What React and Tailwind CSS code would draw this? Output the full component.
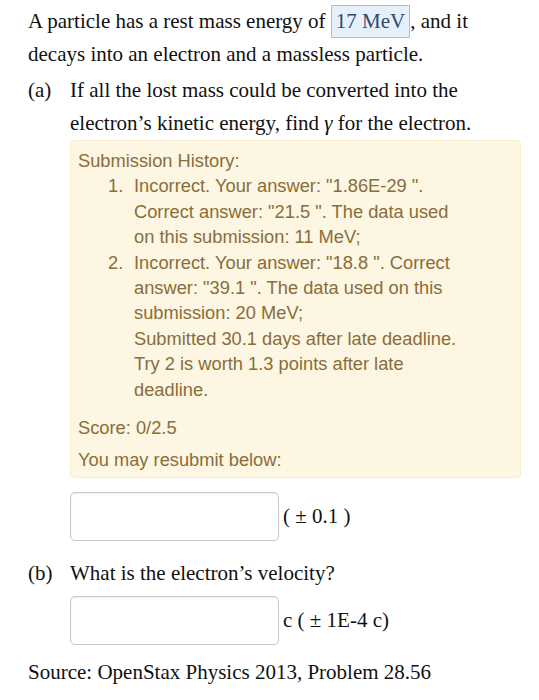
export default function App() {
  const serif = { fontFamily: '"Liberation Serif", "Times New Roman", serif' };
  const Input = () => (
    <div className="w-[209px] h-[49px] rounded-[5px] border border-[#c8c8c8] bg-white shadow-[inset_0_1px_2px_rgba(0,0,0,0.08)] shrink-0" />
  );
  return (
    <div className="w-[539px] h-[700px] bg-white text-[#111] overflow-hidden">
      <div className="pl-[28px] pt-[5px] text-[21px] leading-[33px]" style={serif}>
        <div className="whitespace-nowrap">
          A particle has a rest mass energy of{" "}
          <span className="inline-block h-[33px] px-[4px] border border-[#9fc3e6] bg-[#e6f0fa] text-[#2c4a68] leading-[31px] align-top">
            17 MeV
          </span>
          , and it
        </div>
        <div className="whitespace-nowrap">decays into an electron and a massless particle.</div>
        <div className="flex mt-[3px]">
          <div className="w-[42px] shrink-0">(a)</div>
          <div className="whitespace-nowrap">
            If all the lost mass could be converted into the
            <br />
            electron’s kinetic energy, find <i>γ</i> for the electron.
          </div>
        </div>

        <div
          className="ml-[42px] w-[451px] rounded-[4px] border border-[#f7ecd0] bg-[#fcf6e2] text-[#8a6d3b] text-[18.3px] leading-[25.4px] pt-[7px] pb-[4px] pl-[7px]"
          style={{ fontFamily: '"Liberation Sans", Arial, sans-serif' }}
        >
          <div>Submission History:</div>
          <div className="flex ml-[30px]">
            <div className="w-[26px] shrink-0">1.</div>
            <div className="whitespace-nowrap">
              Incorrect. Your answer: "1.86E-29 ".
              <br />
              Correct answer: "21.5 ". The data used
              <br />
              on this submission: 11 MeV;
            </div>
          </div>
          <div className="flex ml-[30px]">
            <div className="w-[26px] shrink-0">2.</div>
            <div className="whitespace-nowrap">
              Incorrect. Your answer: "18.8 ". Correct
              <br />
              answer: "39.1 ". The data used on this
              <br />
              submission: 20 MeV;
              <br />
              Submitted 30.1 days after late deadline.
              <br />
              Try 2 is worth 1.3 points after late
              <br />
              deadline.
            </div>
          </div>
          <div className="mt-[13px]">Score: 0/2.5</div>
          <div className="mt-[7px]">You may resubmit below:</div>
        </div>

        <div className="flex items-center ml-[42px] mt-[14px]">
          <Input />
          <span className="ml-[4px] whitespace-nowrap">( ± 0.1 )</span>
        </div>

        <div className="flex mt-[16px]">
          <div className="w-[42px] shrink-0">(b)</div>
          <div className="whitespace-nowrap">What is the electron’s velocity?</div>
        </div>

        <div className="flex items-center ml-[42px] mt-[6px]">
          <Input />
          <span className="ml-[4px] whitespace-nowrap">c ( ± 1E-4 c)</span>
        </div>

        <div className="mt-[11px] whitespace-nowrap">Source: OpenStax Physics 2013, Problem 28.56</div>
      </div>
    </div>
  );
}
